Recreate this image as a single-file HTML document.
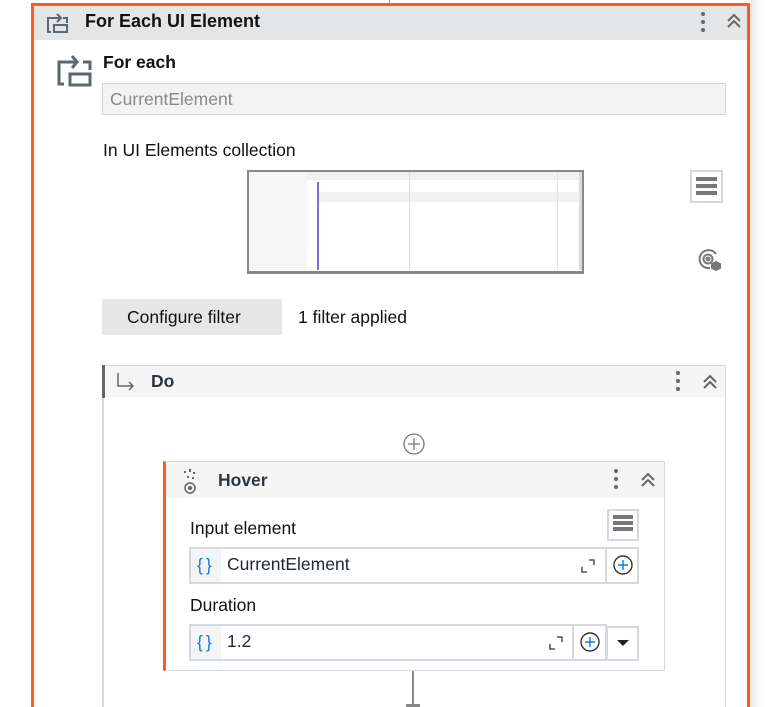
<!DOCTYPE html>
<html style="overflow:hidden"><head><meta charset="utf-8"><style>
*{box-sizing:border-box;margin:0;padding:0}
html,body{width:777px;height:707px;overflow:hidden}
body{background:#fff;font-family:"Liberation Sans",sans-serif;color:#111;position:relative}
#w{position:absolute;left:0;top:0;width:777px;height:707px;overflow:hidden}
.a{position:absolute}
.t{font-size:17.5px;white-space:nowrap}
.b{font-weight:bold}
.kb{position:absolute;width:4px}
.kb i{display:block;width:4px;height:4px;border-radius:2px;background:#666;margin-bottom:4px}
</style></head><body><div id="w">
<div class="a" style="left:750px;top:0;width:12px;height:707px;background:linear-gradient(90deg,#e6e6e6,#fff)"></div>
<div class="a" style="left:389px;top:0;width:1px;height:3px;background:#999"></div>
<div class="a" style="left:31px;top:3px;width:719px;height:720px;border:3px solid #ff5a1f;background:#fff"></div>
<div class="a" style="left:34px;top:6px;width:713px;height:34px;background:#e4e5e7"></div>
<svg class="a" style="left:45px;top:10px" width="26" height="26" viewBox="0 0 26 26" fill="none" stroke="#5b6770" stroke-width="2"><path d="M6 22H3V8h12M12 4l4 4-4 4"/><path d="M18 8h4v5"/><rect x="9" y="15" width="13" height="7"/></svg>
<div class="a t b" style="left:85px;top:11px;font-size:18px">For Each UI Element</div>
<div class="kb" style="left:701px;top:12px"><i></i><i></i><i></i></div>
<svg class="a" style="left:725px;top:12px" width="18" height="18" viewBox="0 0 18 18" fill="none" stroke="#666" stroke-width="2"><path d="M3 9l6-6 6 6M3 15l6-6 6 6"/></svg>
<svg class="a" style="left:56px;top:52px" width="38" height="36" viewBox="0 0 38 36" fill="none" stroke="#5b6770" stroke-width="3"><path d="M8 32H3V10h17M16 4l5 6-5 6"/><path d="M27 10h7v8"/><rect x="14" y="22" width="20" height="11"/></svg>
<div class="a t b" style="left:103px;top:52px">For each</div>
<div class="a" style="left:102px;top:83px;width:624px;height:32px;background:#f3f3f3;border:1px solid #d6d6d6"></div>
<div class="a t" style="left:110px;top:89px;color:#888">CurrentElement</div>
<div class="a t" style="left:103px;top:140px">In UI Elements collection</div>
<div class="a" style="left:247px;top:170px;width:337px;height:104px;border:2px solid #888;background:#fff;border-bottom-width:3px;overflow:hidden">
 <div class="a" style="left:0;top:0;width:58px;height:98px;background:#f6f6f6"></div>
 <div class="a" style="left:58px;top:0;width:275px;height:8px;background:#f0f0f0"></div>
 <div class="a" style="left:68px;top:20px;width:265px;height:10px;background:#f1f1f1"></div>
 <div class="a" style="left:68px;top:10px;width:5px;height:88px;border-left:2px solid #7770e0"></div>
 <div class="a" style="left:160px;top:0;width:1px;height:98px;background:#ddd"></div>
 <div class="a" style="left:308px;top:0;width:1px;height:98px;background:#e4e4e4"></div>
 <div class="a" style="left:330px;top:0;width:3px;height:98px;background:#ddd"></div>
</div>
<div class="a" style="left:690px;top:170px;width:33px;height:33px;border:2px solid #d4d8e0"></div>
<div class="a" style="left:696px;top:177px;width:21px;height:4px;background:#777;box-shadow:0 7px 0 #777,0 14px 0 #777"></div>
<svg class="a" style="left:696px;top:246px" width="28" height="28" viewBox="0 0 28 28" fill="none" stroke="#777" stroke-width="2"><path d="M20 8A9 9 0 1 0 14 22"/><circle cx="12" cy="13" r="4.5"/><circle cx="12" cy="13" r="1.5"/><path d="M16 18l4-2 4 2v4l-4 2-4-2z" fill="#777"/></svg>
<div class="a" style="left:102px;top:299px;width:180px;height:36px;background:#e6e6e6"></div>
<div class="a t" style="left:127px;top:307px">Configure filter</div>
<div class="a t" style="left:298px;top:307px">1 filter applied</div>
<div class="a" style="left:102px;top:365px;width:624px;height:360px;border:1px solid #d5dbe1;border-left:2px solid #d5dbe1"></div>
<div class="a" style="left:102px;top:365px;width:3px;height:33px;background:#666"></div>
<div class="a" style="left:105px;top:366px;width:620px;height:31px;background:#f5f5f5"></div>
<svg class="a" style="left:115px;top:371px" width="22" height="20" viewBox="0 0 22 20" fill="none" stroke="#666" stroke-width="1.5"><path d="M3 2v13h15M14 11l4 4-4 4"/></svg>
<div class="a t b" style="left:151px;top:371px;color:#2d3540">Do</div>
<div class="kb" style="left:676px;top:371px"><i></i><i></i><i></i></div>
<svg class="a" style="left:701px;top:373px" width="18" height="18" viewBox="0 0 18 18" fill="none" stroke="#666" stroke-width="2"><path d="M3 9l6-6 6 6M3 15l6-6 6 6"/></svg>
<svg class="a" style="left:403px;top:433px" width="22" height="22" viewBox="0 0 22 22" fill="none" stroke="#777" stroke-width="1.3"><circle cx="11" cy="11" r="10"/><path d="M11 5v12M5 11h12"/></svg>
<div class="a" style="left:163px;top:461px;width:502px;height:210px;border:1px solid #d5dbe1;border-left:3px solid #ff5a1f"></div>
<div class="a" style="left:166px;top:462px;width:498px;height:36px;background:#f5f5f5"></div>
<svg class="a" style="left:180px;top:468px" width="20" height="28" viewBox="0 0 20 28" fill="#666"><circle cx="10" cy="20" r="5" fill="none" stroke="#666" stroke-width="1.5"/><circle cx="10" cy="20" r="2"/><rect x="4" y="3" width="2" height="2"/><rect x="9" y="1" width="2" height="3"/><rect x="13" y="4" width="2" height="2"/><rect x="7" y="8" width="2" height="2"/><rect x="12" y="9" width="2" height="2"/></svg>
<div class="a t b" style="left:218px;top:470px;color:#2d3540">Hover</div>
<div class="kb" style="left:614px;top:469px"><i></i><i></i><i></i></div>
<svg class="a" style="left:639px;top:471px" width="18" height="18" viewBox="0 0 18 18" fill="none" stroke="#666" stroke-width="2"><path d="M3 9l6-6 6 6M3 15l6-6 6 6"/></svg>
<div class="a t" style="left:190px;top:518px">Input element</div>
<div class="a" style="left:607px;top:509px;width:32px;height:32px;border:2px solid #d4d8e0"></div>
<div class="a" style="left:613px;top:515px;width:20px;height:4px;background:#777;box-shadow:0 6px 0 #777,0 12px 0 #777"></div>
<div class="a" style="left:189px;top:547px;width:450px;height:37px;border:2px solid #d4d8e0"></div>
<div class="a" style="left:191px;top:549px;width:30px;height:33px;background:#f3f4f6"></div>
<div class="a" style="left:605px;top:549px;width:2px;height:33px;background:#d4d8e0"></div>
<div class="a t" style="left:197px;top:555px;color:#1a73e8;letter-spacing:3px">{}</div>
<div class="a t" style="left:227px;top:554px;color:#1e2733">CurrentElement</div>
<svg class="a" style="left:580px;top:558px" width="16" height="16" viewBox="0 0 16 16" fill="none" stroke="#333" stroke-width="1.3"><path d="M2 9v5h5M9 2h5v5"/></svg>
<svg class="a" style="left:612px;top:554px" width="22" height="22" viewBox="0 0 22 22" fill="none" stroke-width="1.4"><circle cx="11" cy="11" r="9" stroke="#333"/><path d="M11 6v10M6 11h10" stroke="#1a73e8"/></svg>
<div class="a t" style="left:190px;top:595px">Duration</div>
<div class="a" style="left:189px;top:624px;width:418px;height:37px;border:2px solid #d4d8e0"></div>
<div class="a" style="left:191px;top:626px;width:30px;height:33px;background:#f3f4f6"></div>
<div class="a" style="left:572px;top:626px;width:2px;height:33px;background:#d4d8e0"></div>
<div class="a" style="left:606px;top:626px;width:33px;height:35px;border:2px solid #d4d8e0"></div>
<div class="a" style="left:617px;top:640px;border-left:6px solid transparent;border-right:6px solid transparent;border-top:6px solid #222"></div>
<div class="a t" style="left:197px;top:632px;color:#1a73e8;letter-spacing:3px">{}</div>
<div class="a t" style="left:227px;top:631px;color:#1e2733">1.2</div>
<svg class="a" style="left:548px;top:635px" width="16" height="16" viewBox="0 0 16 16" fill="none" stroke="#333" stroke-width="1.3"><path d="M2 9v5h5M9 2h5v5"/></svg>
<svg class="a" style="left:579px;top:631px" width="22" height="22" viewBox="0 0 22 22" fill="none" stroke-width="1.4"><circle cx="11" cy="11" r="9" stroke="#333"/><path d="M11 6v10M6 11h10" stroke="#1a73e8"/></svg>
<div class="a" style="left:412px;top:671px;width:2px;height:35px;background:#888"></div>
<div class="a" style="left:406px;top:704px;width:14px;height:3px;background:#888"></div>
</div></body></html>
